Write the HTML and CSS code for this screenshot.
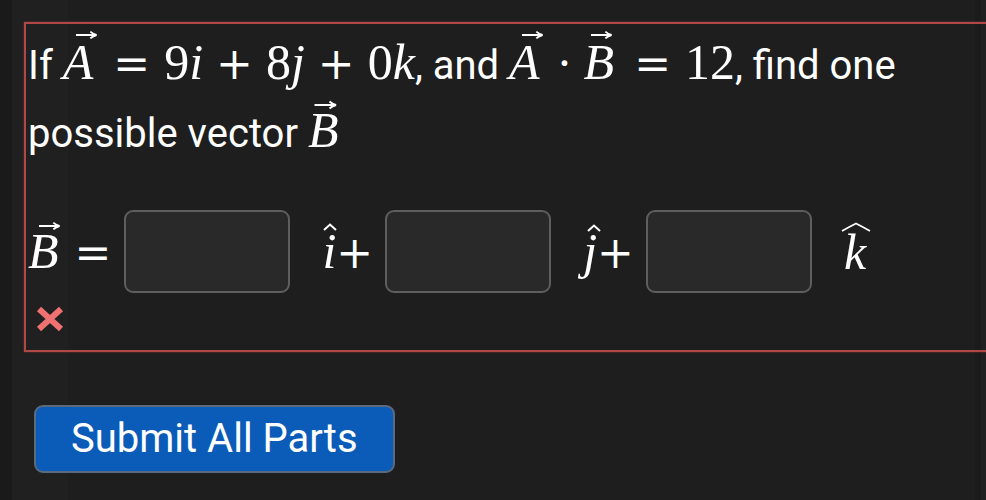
FILE: index.html
```html
<!DOCTYPE html>
<html lang="en">
<head>
<meta charset="utf-8">
<title>Vector question</title>
<link rel="stylesheet" href="styles.css">
</head>
<body>
<div class="page">
  <div class="question">
    <p class="prompt">If <span class="m"><span class="v">A<svg class="arr arr-a" viewBox="0 0 24 10"><path d="M1 5H22M16 1.5Q19 4.2 22.5 5Q19 5.8 16 8.5"/></svg></span><span class="rel">=</span><span>9</span><i>i</i><span class="bin">+</span><span>8</span><i>j</i><span class="bin">+</span><span>0</span><i>k</i></span>, and <span class="m"><span class="v">A<svg class="arr arr-a" viewBox="0 0 24 10"><path d="M1 5H22M16 1.5Q19 4.2 22.5 5Q19 5.8 16 8.5"/></svg></span><span class="bin dot">·</span><span class="v">B<svg class="arr arr-b1" viewBox="0 0 24 10"><path d="M1 5H22M16 1.5Q19 4.2 22.5 5Q19 5.8 16 8.5"/></svg></span><span class="rel">=</span><span>12</span></span>, find one possible vector <span class="m"><span class="v">B<svg class="arr arr-b2" viewBox="0 0 24 10"><path d="M1 5H22M16 1.5Q19 4.2 22.5 5Q19 5.8 16 8.5"/></svg></span></span></p>
    <div class="answer">
      <span class="m lead"><span class="v">B<svg class="arr arr-b3" viewBox="0 0 24 10"><path d="M1 5H22M16 1.5Q19 4.2 22.5 5Q19 5.8 16 8.5"/></svg></span><span class="rel">=</span></span>
      <div class="box"></div>
      <span class="m unit"><span class="h"><i>i</i><svg class="hat hat-i" viewBox="0 0 14 8"><path d="M1 7L7 1.5L13 7"/></svg></span><span class="plus">+</span></span>
      <div class="box"></div>
      <span class="m unit"><span class="h"><i>j</i><svg class="hat hat-j" viewBox="0 0 14 8"><path d="M1 7L7 1.5L13 7"/></svg></span><span class="plus">+</span></span>
      <div class="box"></div>
      <span class="m unit last"><span class="h"><i>k</i><svg class="hat hat-k" viewBox="0 0 30 10"><path d="M1 9Q8 5 15 1.5Q22 5 29 9"/></svg></span></span>
    </div>
    <svg class="wrong" viewBox="0 0 28 26"><path d="M3 3L25 23M25 3L3 23"/></svg>
  </div>
  <button class="submit" type="button">Submit All Parts</button>
</div>
</body>
</html>
```
FILE: styles.css
```css
html, body {
  margin: 0;
  padding: 0;
}
body {
  width: 986px;
  height: 500px;
  overflow: hidden;
  background: linear-gradient(to right, #1a1a1a 0 12px, #202020 12px 68px, #1e1e1e 68px 975px, #1b1b1b 975px 981px, #202020 981px);
  color: #ffffff;
  font-family: Roboto, "Liberation Sans", sans-serif;
}
.page {
  padding: 22px 0 0 24px;
}
.question {
  width: 1010px;
  border: 2px solid #b04848;
  border-right: none;
  padding: 8px 0 18px 2px;
  box-shadow: 0 0 2px rgba(176, 72, 72, 0.6);
}
.prompt {
  margin: 0;
  width: 940px;
  font-size: 40px;
  line-height: 68px;
}
.m {
  font-family: "Liberation Serif", "DejaVu Serif", serif;
  font-size: 50px;
  line-height: 48px;
  white-space: nowrap;
}
.m i {
  font-style: italic;
}
.v, .h {
  position: relative;
  display: inline-block;
  font-style: italic;
  line-height: 48px;
}
.v {
  margin-right: 6px;
}
.arr {
  position: absolute;
  width: 23px;
  height: 10px;
  fill: none;
  stroke: #ffffff;
  stroke-width: 2;
}
.arr-a { left: 12px; top: -8px; }
.arr-b1 { left: 6px; top: -8px; }
.arr-b2 { left: 4px; top: -6px; width: 27px; }
.arr-b3 { left: 10px; top: -6px; }
.rel, .bin, .plus {
  font-family: "DejaVu Serif", serif;
  font-size: 44px;
  font-style: normal;
}
.rel {
  margin: 0 14px;
}
.bin {
  margin: 0 13px;
}
.dot {
  margin: 0 12px;
}
.answer {
  display: flex;
  align-items: center;
  margin-top: 42px;
}
.lead .v {
  margin-right: 2px;
}
.lead .rel {
  margin-right: 13px;
}
.box {
  width: 162px;
  height: 79px;
  border: 2px solid #5e5e5e;
  border-radius: 9px;
  background: #292929;
}
.unit {
  margin-left: 32px;
  margin-right: 12px;
}
.unit.last {
  margin-left: 32px;
}
.hat {
  position: absolute;
  fill: none;
  stroke: #ffffff;
  stroke-width: 2;
}
.hat-i { width: 14px; height: 8px; left: 1px; top: -4px; }
.hat-j { width: 14px; height: 8px; left: 4px; top: -3px; }
.hat-k { width: 30px; height: 10px; left: -3px; top: -6px; stroke-width: 1.8; }
.wrong {
  display: block;
  width: 28px;
  height: 26px;
  margin: 13px 0 0 8px;
  fill: none;
  stroke: #f07171;
  stroke-width: 6;
}
.submit {
  display: block;
  margin: 53px 0 0 10px;
  height: 68px;
  padding: 0 35px;
  border: 2px solid #5b6a7c;
  border-radius: 9px;
  background: #0a5cb8;
  color: #ffffff;
  font-family: Roboto, "Liberation Sans", sans-serif;
  font-size: 40px;
  line-height: 1;
}
```
